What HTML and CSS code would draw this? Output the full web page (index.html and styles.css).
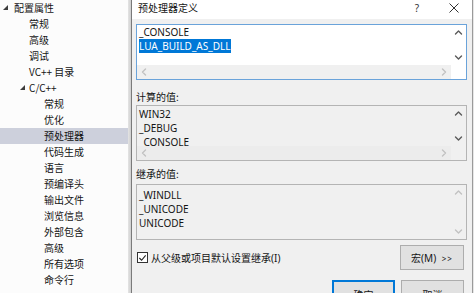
FILE: index.html
```html
<!DOCTYPE html>
<html lang="zh-CN">
<head>
<meta charset="utf-8">
<title>预处理器定义</title>
<link rel="stylesheet" href="styles.css">
</head>
<body>
<div class="screen">
  <aside class="tree">
    <div class="row l0"><svg class="tri" width="6" height="6" viewBox="0 0 6 6"><polygon points="5,0 5,5 0,5" /></svg>配置属性</div>
    <div class="row l1">常规</div>
    <div class="row l1">高级</div>
    <div class="row l1">调试</div>
    <div class="row l1">VC++ 目录</div>
    <div class="row l1b"><svg class="tri" width="6" height="6" viewBox="0 0 6 6"><polygon points="5,0 5,5 0,5" /></svg>C/C++</div>
    <div class="row l2">常规</div>
    <div class="row l2">优化</div>
    <div class="row l2 sel">预处理器</div>
    <div class="row l2">代码生成</div>
    <div class="row l2">语言</div>
    <div class="row l2">预编译头</div>
    <div class="row l2">输出文件</div>
    <div class="row l2">浏览信息</div>
    <div class="row l2">外部包含</div>
    <div class="row l2">高级</div>
    <div class="row l2">所有选项</div>
    <div class="row l2">命令行</div>
  </aside>
  <div class="tree-edge"></div>
  <section class="dialog">
    <header class="titlebar">
      <span class="title">预处理器定义</span>
      <span class="help">?</span>
      <svg class="close" width="10" height="10" viewBox="0 0 10 10"><path d="M0.5 0.5 L9.5 9.5 M9.5 0.5 L0.5 9.5" /></svg>
    </header>
    <div class="body">
      <div class="edit focus">
        <div class="content">
          <div class="line">_CONSOLE</div>
          <div class="line"><span class="selected">LUA_BUILD_AS_DLL</span></div>
        </div>
        <div class="vscroll">
          <svg class="arrow on" width="15" height="15" viewBox="0 0 15 15"><path d="M4.5 9 L7.5 6 L10.5 9" /></svg>
          <svg class="arrow on" width="15" height="15" viewBox="0 0 15 15"><path d="M4.5 6 L7.5 9 L10.5 6" /></svg>
        </div>
        <div class="hscroll">
          <svg class="arrow off" width="15" height="14" viewBox="0 0 15 14"><path d="M8.5 4 L5.5 7 L8.5 10" /></svg>
          <svg class="arrow off" width="15" height="14" viewBox="0 0 15 14"><path d="M6.5 4 L9.5 7 L6.5 10" /></svg>
        </div>
        <div class="corner white"></div>
      </div>

      <div class="label">计算的值:</div>
      <div class="edit ro">
        <div class="content">
          <div class="line">WIN32</div>
          <div class="line">_DEBUG</div>
          <div class="line">_CONSOLE</div>
        </div>
        <div class="vscroll">
          <svg class="arrow on" width="15" height="15" viewBox="0 0 15 15"><path d="M4.5 9 L7.5 6 L10.5 9" /></svg>
          <svg class="arrow on" width="15" height="15" viewBox="0 0 15 15"><path d="M4.5 6 L7.5 9 L10.5 6" /></svg>
        </div>
        <div class="hscroll">
          <svg class="arrow off" width="15" height="14" viewBox="0 0 15 14"><path d="M8.5 4 L5.5 7 L8.5 10" /></svg>
          <svg class="arrow off" width="15" height="14" viewBox="0 0 15 14"><path d="M6.5 4 L9.5 7 L6.5 10" /></svg>
        </div>
        <div class="corner"></div>
      </div>

      <div class="label second">继承的值:</div>
      <div class="edit ro single">
        <div class="content pad">
          <div class="line">_WINDLL</div>
          <div class="line">_UNICODE</div>
          <div class="line">UNICODE</div>
        </div>
        <div class="vscroll">
          <svg class="arrow off" width="15" height="15" viewBox="0 0 15 15"><path d="M4.5 9 L7.5 6 L10.5 9" /></svg>
          <svg class="arrow off" width="15" height="15" viewBox="0 0 15 15"><path d="M4.5 6 L7.5 9 L10.5 6" /></svg>
        </div>
      </div>

      <div class="checkrow">
        <label class="check">
          <span class="box"><svg width="10" height="10" viewBox="0 0 10 10"><path d="M1.5 5 L4 7.5 L8.5 2" /></svg></span>
          <span>从父级或项目默认设置继承(I)</span>
        </label>
        <button class="btn macro">宏(M) <span class="chev">&gt;&gt;</span></button>
      </div>

      <div class="buttons">
        <button class="btn default">确定</button>
        <button class="btn">取消</button>
      </div>
    </div>
  </section>
</div>
</body>
</html>
```

FILE: styles.css
```css
* { box-sizing: border-box; }

html, body {
  margin: 0;
  padding: 0;
  width: 474px;
  height: 293px;
  overflow: hidden;
  background: #e6e6e6;
}

.screen {
  display: flex;
  width: 474px;
  height: 293px;
  font-family: "Noto Sans", "Noto Sans CJK SC", sans-serif;
  font-size: 10px;
  color: #141414;
}

/* ---------- tree ---------- */
.tree {
  width: 128px;
  flex: none;
  background: #fcfcfc;
  padding-top: 0;
  font-family: "Noto Sans CJK SC", sans-serif;
  font-size: 10px;
}

.row {
  height: 16px;
  line-height: 16px;
  display: flex;
  align-items: center;
  white-space: nowrap;
}

.row.l0 { padding-left: 3px; }
.row.l1 { padding-left: 29px; }
.row.l1b { padding-left: 20px; }
.row.l2 { padding-left: 44px; }

.row .tri {
  fill: #3c3c3c;
  margin-right: 5px;
  flex: none;
}
.row.l1b .tri { margin-right: 3px; }

.row.sel { background: #cdd0dc; }

.tree-edge {
  width: 3px;
  flex: none;
  background: linear-gradient(to right, #e4e4e4, #cfcfcf);
}

/* ---------- dialog ---------- */
.dialog {
  width: 342px;
  flex: none;
  border-left: 1px solid #7a7a7a;
  border-right: 1px solid #9a9a9a;
  background: #f0f0f0;
  display: flex;
  flex-direction: column;
}

.titlebar {
  height: 22px;
  background: #ffffff;
  display: flex;
  align-items: center;
  padding-left: 6px;
  padding-bottom: 4px;
}

.title {
  font-family: "Noto Sans CJK SC", sans-serif;
  flex: 1;
}

.help {
  font-size: 10px;
  margin-right: 30px;
  color: #333;
}

.close {
  margin-right: 13px;
  stroke: #333;
  stroke-width: 1;
  fill: none;
}

.body {
  padding: 5px 5px 0 4px;
}

.edit {
  height: 56px;
  border: 1px solid #b4b4b4;
  display: grid;
  grid-template-columns: 1fr 15px;
  grid-template-rows: 40px 14px;
  background: #f0f0f0;
}

.edit.focus {
  border-color: #6aa3da;
  background: #ffffff;
}

.edit.single {
  grid-template-rows: 54px;
}

.content {
  padding: 0 0 0 2px;
  overflow: hidden;
  line-height: 14px;
  white-space: nowrap;
}

.content.pad { padding-top: 3px; }
.edit.ro .content { padding-top: 1px; }
.edit.ro .content.pad { padding-top: 3px; }

.selected {
  background: #0078d7;
  color: #ffffff;
  padding: 0 1px 0 0;
}

.vscroll {
  display: flex;
  flex-direction: column;
  justify-content: space-between;
}

.hscroll {
  display: flex;
  justify-content: space-between;
  background: #ececec;
}

.edit.focus .hscroll { background: #f0f0f0; }

.corner.white { background: #ffffff; }

.arrow {
  fill: none;
  stroke-width: 1.4;
  stroke-linecap: round;
  stroke-linejoin: round;
}
.arrow.on { stroke: #5a5a5a; }
.arrow.off { stroke: #c2c2c2; }

.label {
  padding-top: 9px;
  height: 25px;
  line-height: 16px;
  font-family: "Noto Sans CJK SC", sans-serif;
}

.label.second {
  padding-top: 5px;
  height: 23px;
}

.checkrow {
  margin-top: 5px;
  display: flex;
  align-items: center;
  justify-content: space-between;
  padding-right: 3px;
}

.check {
  display: flex;
  align-items: center;
  gap: 3px;
  padding-left: 1px;
  font-family: "Noto Sans", "Noto Sans CJK SC", sans-serif;
}

.check .box {
  width: 11px;
  height: 11px;
  border: 1px solid #333;
  background: #fff;
  display: flex;
  align-items: center;
  justify-content: center;
}

.check .box svg {
  fill: none;
  stroke: #222;
  stroke-width: 1.2;
}

.btn {
  font-family: "Noto Sans", "Noto Sans CJK SC", sans-serif;
  font-size: 10px;
  color: #141414;
  background: #e1e1e1;
  border: 1px solid #adadad;
  width: 64px;
  height: 25px;
  padding: 0;
}

.btn .chev {
  font-size: 8px;
  letter-spacing: 1px;
  margin-left: 3px;
}

.buttons {
  margin-top: 10px;
  display: flex;
  justify-content: flex-end;
  gap: 6px;
  padding-right: 3px;
}

.buttons .btn {
  height: 23px;
  width: 63px;
  padding-top: 6px;
  line-height: 14px;
}

.btn.default {
  border: 2px solid #0078d7;
}
```
